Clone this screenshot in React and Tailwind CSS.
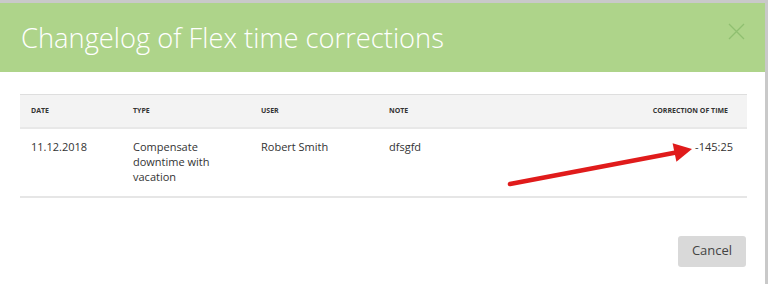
export default function App() {
  return (
    <div className="w-[768px] h-[284px] bg-[#c9c9c9] pt-[3px] pr-[3px] overflow-hidden" style={{ fontFamily: '"Open Sans", sans-serif' }}>
      <div className="relative h-[281px] bg-white">
        <div className="flex h-[69px] items-center justify-between bg-[#aed48a] pl-[21px] pr-[20px]">
          <h1 className="mt-[2px] text-[27.3px] font-light text-white">Changelog of Flex time corrections</h1>
          <svg width="17" height="17" viewBox="0 0 17 17" className="mb-[12px]">
            <path d="M1 1 L16 16 M16 1 L1 16" stroke="#8fbf70" strokeWidth="1.3" />
          </svg>
        </div>

        <div className="px-[20px] pt-[22px]">
          <table className="w-[727px] table-fixed border-collapse text-left">
            <thead>
              <tr className="h-[33px] bg-[#f3f3f3] border-t border-[#dedede] border-b-2 border-b-[#e8e8e8]">
                <th className="w-[113px] pl-[11px] text-[7px] font-bold uppercase text-[#333]">Date</th>
                <th className="w-[128px] text-[7px] font-bold uppercase text-[#333]">Type</th>
                <th className="w-[128px] text-[7px] font-bold uppercase text-[#333]">User</th>
                <th className="text-[7px] font-bold uppercase text-[#333]">Note</th>
                <th className="w-[160px] pr-[19px] text-right text-[7px] font-bold uppercase text-[#333]">Correction of time</th>
              </tr>
            </thead>
            <tbody>
              <tr className="border-b-2 border-[#e6e6e6] align-top text-[11px] leading-[15px] text-[#333]">
                <td className="pl-[11px] pt-[10px] pb-[12px]">11.12.2018</td>
                <td className="pt-[10px] pb-[12px]">Compensate<br />downtime with<br />vacation</td>
                <td className="pt-[10px]">Robert Smith</td>
                <td className="pt-[10px]">dfsgfd</td>
                <td className="pt-[10px] pr-[14px] text-right">-145:25</td>
              </tr>
            </tbody>
          </table>
        </div>

        <svg className="absolute left-[505px] top-[136px]" width="200" height="52" viewBox="0 0 200 52">
          <path d="M5 45 L171 13.5" stroke="#e01b1b" strokeWidth="4.5" strokeLinecap="round" />
          <path d="M167.6 4.2 L187 10 L171.4 22.8 Z" fill="#e01b1b" />
        </svg>

        <div className="flex justify-end pr-[19px] pt-[38px]">
          <button className="h-[31px] w-[68px] rounded-[3px] bg-[#d9d9d9] text-[13px] text-[#444]">Cancel</button>
        </div>
      </div>
    </div>
  );
}
